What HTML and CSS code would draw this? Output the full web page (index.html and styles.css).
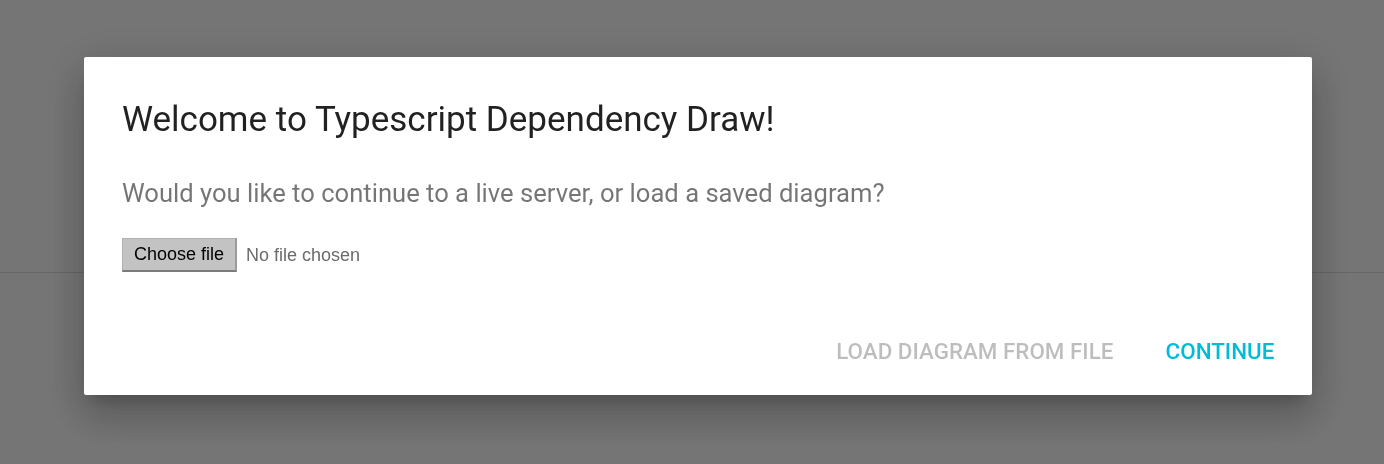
FILE: index.html
```html
<!DOCTYPE html>
<html lang="en">
<head>
  <meta charset="UTF-8">
  <meta name="viewport" content="width=device-width, initial-scale=1.0">
  <title>Typescript Dependency Draw</title>
  <link rel="stylesheet" href="styles.css">
</head>
<body>

  <!-- App underneath the dialog -->
  <div class="page">
    <div class="toolbar"></div>
  </div>

  <!-- Welcome dialog -->
  <div class="backdrop">
    <div class="dialog" role="dialog">
      <h2 class="dialog-title">Welcome to Typescript Dependency Draw!</h2>
      <div class="dialog-content">
        <p class="dialog-text">Would you like to continue to a live server, or load a saved diagram?</p>
        <div class="file-picker">
          <label class="file-btn" for="diagramFile">Choose file</label>
          <input type="file" id="diagramFile" class="file-input">
          <span class="file-name">No file chosen</span>
        </div>
      </div>
      <div class="dialog-actions">
        <button class="action-btn" disabled>Load diagram from file</button>
        <button class="action-btn primary">Continue</button>
      </div>
    </div>
  </div>

</body>
</html>
```

FILE: styles.css
```css
/* General Reset */
* {
  margin: 0;
  padding: 0;
  box-sizing: border-box;
}

body {
  font-family: Roboto, 'Liberation Sans', sans-serif;
  background-color: #fff;
}

.page {
  height: 464px;
}

.toolbar {
  height: 273px;
  border-bottom: 1px solid #e0e0e0;
}

/* Modal styles */
.backdrop {
  position: fixed;
  top: 0;
  left: 0;
  right: 0;
  bottom: 0;
  background-color: rgba(0, 0, 0, 0.54);
  display: flex;
  align-items: flex-start;
  padding: 57px 72px 0 84px;
}

.dialog {
  flex: 1;
  background-color: #fff;
  border-radius: 2px;
  box-shadow: 0 11px 15px -7px rgba(0, 0, 0, 0.2),
              0 24px 38px 3px rgba(0, 0, 0, 0.14),
              0 9px 46px 8px rgba(0, 0, 0, 0.12);
}

.dialog-title {
  padding: 43px 38px 0;
  font-size: 35px;
  font-weight: 400;
  line-height: 39px;
  color: rgba(0, 0, 0, 0.87);
}

.dialog-content {
  padding: 35px 38px 0;
}

.dialog-text {
  font-size: 25.6px;
  line-height: 38px;
  color: rgba(0, 0, 0, 0.54);
}

.file-picker {
  display: flex;
  align-items: center;
  gap: 9px;
  margin-top: 26px;
  font-family: 'Liberation Sans', Arial, sans-serif;
  font-size: 18px;
}

.file-btn {
  display: inline-block;
  height: 34px;
  padding: 0 11px;
  line-height: 31px;
  color: #000;
  background-color: #c3c3c3;
  border: 1px solid #b0b0b0;
  border-bottom: 2px solid #7a7a7a;
  border-right: 2px solid #9a9a9a;
  cursor: pointer;
}

.file-input {
  display: none;
}

.file-name {
  color: #6b6b6b;
}

.dialog-actions {
  display: flex;
  justify-content: flex-end;
  gap: 1px;
  padding: 66px 12px 31px;
}

.action-btn {
  background: none;
  border: none;
  padding: 0 25.6px;
  font-family: Roboto, sans-serif;
  font-size: 22.4px;
  font-weight: 500;
  line-height: 26px;
  text-transform: uppercase;
  color: #00bcd4;
  cursor: pointer;
}

.action-btn:disabled {
  color: rgba(0, 0, 0, 0.26);
  cursor: default;
}
```
